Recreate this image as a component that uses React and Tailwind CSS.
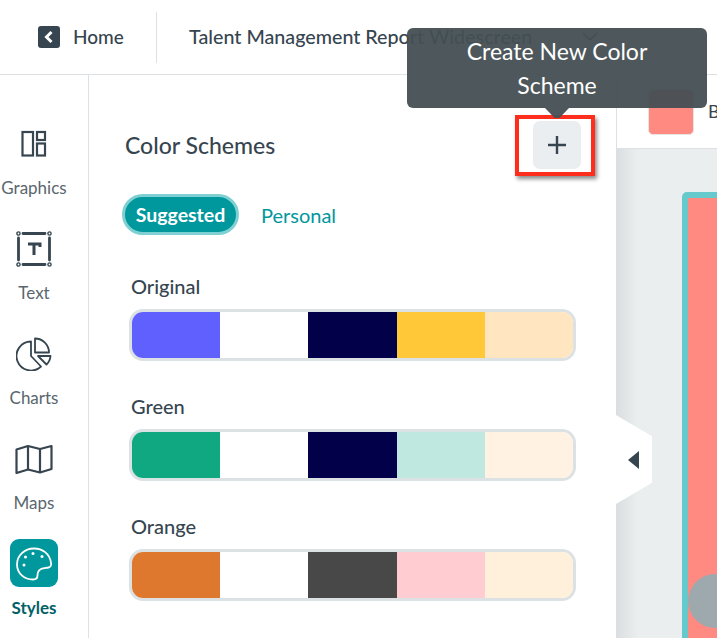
import React from "react";

const schemes = [
  { name: "Original", colors: ["bg-[#6060ff]", "bg-white", "bg-[#03004a]", "bg-[#ffc839]", "bg-[#ffe6c0]"] },
  { name: "Green", colors: ["bg-[#0fa880]", "bg-white", "bg-[#03004a]", "bg-[#bfe8e0]", "bg-[#fff2e2]"] },
  { name: "Orange", colors: ["bg-[#de782e]", "bg-white", "bg-[#484848]", "bg-[#ffccd2]", "bg-[#fff0dc]"] },
];

const GraphicsIcon = () => (
  <svg width="28" height="28" viewBox="0 0 28 28" fill="none" stroke="#36454f" strokeWidth="2.2">
    <rect x="2.5" y="2" width="10.5" height="23.5" />
    <rect x="17" y="2" width="8" height="8" />
    <rect x="17" y="13.5" width="8" height="12" />
  </svg>
);

const TextIcon = () => (
  <svg width="36" height="36" viewBox="0 0 36 36" fill="none" stroke="#36454f">
    <g strokeWidth="2.8" strokeLinecap="round">
      <path d="M7 2.5h22M7 33.5h22M2.500 7v22M33.500 7v22" />
    </g>
    <g strokeWidth="1.4">
      <circle cx="2.500" cy="2.500" r="1.600" />
      <circle cx="33.500" cy="2.500" r="1.600" />
      <circle cx="2.500" cy="33.500" r="1.600" />
      <circle cx="33.500" cy="33.500" r="1.600" />
    </g>
    <path d="M12 13h12v3M18 13v11" strokeWidth="3" />
  </svg>
);

const ChartsIcon = () => (
  <svg width="36" height="34" viewBox="0 0 36 34" fill="none" stroke="#36454f" strokeWidth="1.800" strokeLinejoin="round">
    <path d="M15 4.500a14.500 14.500 0 1 0 10 25L15 19z" />
    <path d="M19 1.500a14 14 0 0 1 14 14H19z" />
    <path d="M22 19h12.500a13 13 0 0 1-4 8.500z" />
  </svg>
);

const MapsIcon = () => (
  <svg width="38" height="30" viewBox="0 0 38 30" fill="none" stroke="#36454f" strokeWidth="2.2" strokeLinejoin="round">
    <path d="M1.500 5.500 13 2l12 3 11.500-3v23L25 28.500l-12-3-11.500 3.500z" />
    <path d="M13 2v23.500M25 5v23.500" />
  </svg>
);

const PaletteIcon = () => (
  <svg width="48" height="48" viewBox="0 0 48 48" fill="none">
    <path
      d="M24 9.500C14.500 9.500 7 16.500 7 25.500 7 34.500 14.500 40.500 23 40.500c3 0 4.500-1.500 4.500-4 0-2.500 0.500-5 3.500-6.500 2.500-1.200 5-1 7.500-1.500 2.500-.5 3-2.500 2.500-5C39.500 14.500 32.500 9.500 24 9.500z"
      stroke="white"
      strokeWidth="1.800"
    />
    <g fill="white">
      <circle cx="23" cy="14.500" r="1.500" />
      <circle cx="32" cy="17.500" r="1.500" />
      <circle cx="15.500" cy="18" r="1.500" />
      <circle cx="14" cy="26" r="1.500" />
    </g>
  </svg>
);

const tools = [
  { label: "Graphics", icon: <GraphicsIcon /> },
  { label: "Text", icon: <TextIcon /> },
  { label: "Charts", icon: <ChartsIcon /> },
  { label: "Maps", icon: <MapsIcon /> },
];

function SchemeRow({ scheme }) {
  return (
    <div className="mb-[32px]">
      <div className="mb-[9px] h-[27px] pl-[2px] text-[20px] leading-[27px] font-medium text-[#36454f]">{scheme.name}</div>
      <div className="flex h-[52px] w-[447px] overflow-hidden rounded-[14px] border-[3px] border-[#dce1e4]">
        {scheme.colors.map((c, i) => (
          <div key={i} className={`flex-1 ${c}`} />
        ))}
      </div>
    </div>
  );
}

export default function App() {
  return (
    <div className="relative flex h-[638px] w-[717px] flex-col overflow-hidden bg-white font-['Lato','Noto_Sans',sans-serif] text-[#36454f]">
      <header className="flex h-[75px] shrink-0 items-center border-b border-[#dde1e3]">
        <div className="flex h-[51px] w-[157px] items-center self-center border-r border-[#dde1e3] pl-[38px]">
          <span className="flex h-[22px] w-[22px] items-center justify-center rounded-[3px] bg-[#36454f]">
            <svg width="14" height="14" viewBox="0 0 14 14" fill="none" stroke="white" strokeWidth="3">
              <path d="M9.500 2 4.500 7l5 5" />
            </svg>
          </span>
          <span className="ml-[13px] text-[19px] font-medium">Home</span>
        </div>
        <span className="ml-[32px] text-[19.7px] font-medium whitespace-nowrap">Talent Management Report Widescreen</span>
        <svg className="ml-[50px]" width="16" height="10" viewBox="0 0 16 10" fill="none" stroke="#36454f" strokeWidth="1.500">
          <path d="M1 1l7 7 7-7" />
        </svg>
      </header>

      <div className="flex min-h-0 flex-1">
        <nav className="flex w-[89px] shrink-0 flex-col items-center border-r border-[#dde1e3] pt-[51px] pr-[20px]">
          {tools.map((t) => (
            <div key={t.label} className="flex h-[105px] w-full flex-col items-center">
              <div className="flex h-[36px] items-center justify-center">{t.icon}</div>
              <span className="mt-[14px] text-[17px] leading-[24px] text-[#5a666e]">{t.label}</span>
            </div>
          ))}
          <div className="-mt-[7px] flex flex-col items-center">
            <div className="h-[48px] w-[48px] rounded-[9px] bg-[#00979d]">
              <PaletteIcon />
            </div>
            <span className="mt-[9px] text-[17px] leading-[24px] font-bold text-[#035f66]">Styles</span>
          </div>
        </nav>

        <section className="w-[527px] shrink-0 pt-[46px] pl-[36px]">
          <div className="flex h-[48px] items-center justify-between">
            <h2 className="text-[23px] font-medium text-[#36454f]">Color Schemes</h2>
            <button className="mr-[35px] flex h-[48px] w-[48px] items-center justify-center rounded-[7px] bg-[#ebeef0]">
              <svg width="20" height="20" viewBox="0 0 20 20" stroke="#36454f" strokeWidth="2.400">
                <path d="M10 1v18M1 10h18" />
              </svg>
            </button>
          </div>
          <div className="mt-[25px] flex items-center">
            <span className="-ml-[3px] flex h-[41px] w-[117px] items-center justify-center rounded-full border-[3px] border-[#7fd0d3] bg-[#00979d] text-[19.500px] font-bold text-white">
              Suggested
            </span>
            <span className="ml-[22px] text-[20px] text-[#00979d]">Personal</span>
          </div>
          <div className="mt-[38px] ml-[4px]">
            {schemes.map((s) => (
              <SchemeRow key={s.name} scheme={s} />
            ))}
          </div>
        </section>

        <div className="flex min-w-0 flex-1 flex-col">
          <div className="flex h-[74px] shrink-0 items-center border-b border-l border-[#dde1e3] pl-[31px]">
            <span className="h-[46px] w-[46px] shrink-0 rounded-[5px] border border-[#e5e5e5] bg-[#ff8a82]" />
            <span className="ml-[14px] text-[18px]">B</span>
          </div>
          <div className="min-h-0 flex-1 bg-[linear-gradient(90deg,#dadee0_0px,#eaeeef_22px)] pt-[43px] pl-[66px]">
            <div className="relative h-[520px] w-[200px] rounded-tl-[5px] border-[6px] border-[#66c9cc] bg-[#ff8a82]">
              <span className="absolute top-[376px] left-0 h-[54px] w-[54px] rounded-full bg-[#9ea9ae]" />
            </div>
          </div>
        </div>
      </div>

      {/* notch on the panel edge */}
      <div className="absolute top-[415px] left-[616px] flex h-[89px] w-[36px] items-center bg-white [clip-path:polygon(0_0,100%_24%,100%_76%,0_100%)]">
        <svg className="ml-[12px]" width="11" height="18" viewBox="0 0 11 18" fill="#36454f">
          <path d="M0 9 11 0v18z" />
        </svg>
      </div>

      {/* highlight round the + button */}
      <div className="absolute top-[115px] left-[515px] h-[61px] w-[80px] border-[4px] border-[#ff2d1c] shadow-[2px_3px_4px_rgba(0,0,0,0.45)]" />

      {/* tooltip */}
      <div className="absolute top-[28px] left-[407px] flex h-[80px] w-[300px] flex-col items-center rounded-[6px] bg-[#444f53]/95 pt-[6px] text-center text-[23px] leading-[34px] text-white">
        <span>Create New Color</span>
        <span>Scheme</span>
      </div>
      <div className="absolute top-[108px] left-[545px] h-[10px] w-[24px] bg-[#444f53]/95 [clip-path:polygon(0_0,100%_0,60%_100%,40%_100%)]" />
    </div>
  );
}
